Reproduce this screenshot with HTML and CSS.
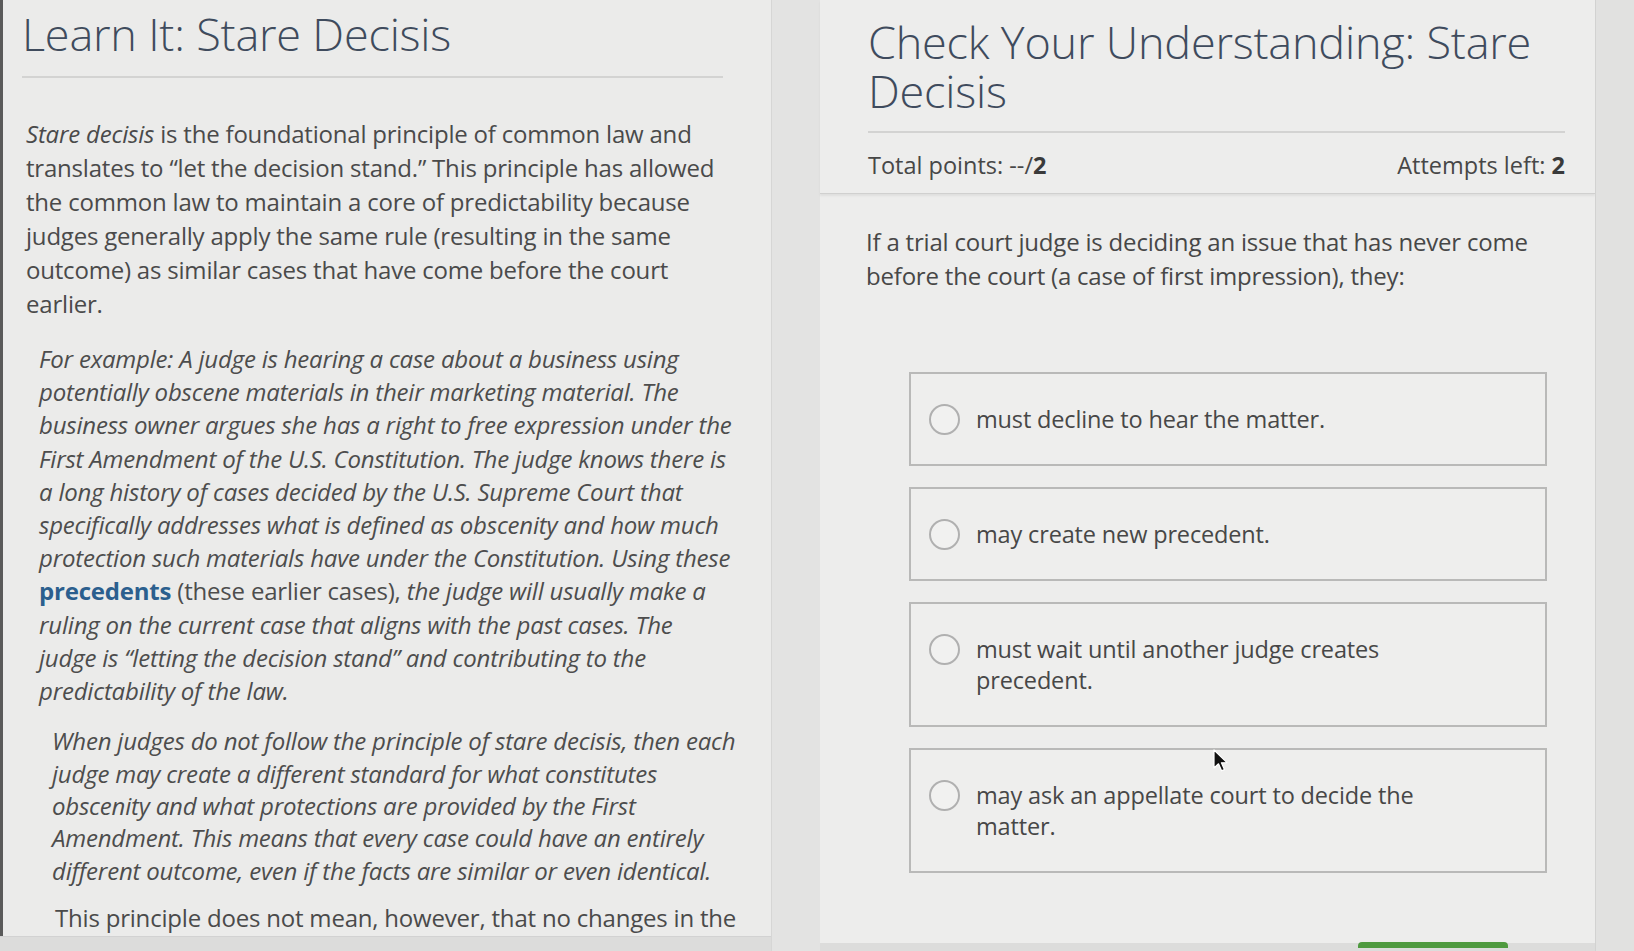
FILE: index.html
```html
<!DOCTYPE html>
<html lang="en">
<head>
<meta charset="utf-8">
<title>Stare Decisis</title>
<link rel="stylesheet" href="styles.css">
</head>
<body>
<div class="page">
  <section class="learn">
    <h1 class="learn-title">Learn It: Stare Decisis</h1>
    <hr class="rule">
    <p class="p1"><em>Stare decisis</em> is the foundational principle of common law and<br>translates to “let the decision stand.” This principle has allowed<br>the common law to maintain a core of predictability because<br>judges generally apply the same rule (resulting in the same<br>outcome) as similar cases that have come before the court<br>earlier.</p>
    <p class="p2"><em>For example: A judge is hearing a case about a business using<br>potentially obscene materials in their marketing material. The<br>business owner argues she has a right to free expression under the<br>First Amendment of the U.S. Constitution. The judge knows there is<br>a long history of cases decided by the U.S. Supreme Court that<br>specifically addresses what is defined as obscenity and how much<br>protection such materials have under the Constitution. Using these<br><strong class="term">precedents</strong> <span class="up">(these earlier cases),</span> the judge will usually make a<br>ruling on the current case that aligns with the past cases. The<br>judge is “letting the decision stand” and contributing to the<br>predictability of the law.</em></p>
    <p class="p3"><em>When judges do not follow the principle of stare decisis, then each<br>judge may create a different standard for what constitutes<br>obscenity and what protections are provided by the First<br>Amendment. This means that every case could have an entirely<br>different outcome, even if the facts are similar or even identical.</em></p>
    <p class="p4">This principle does not mean, however, that no changes in the</p>
  </section>
  <div class="gutter"></div>
  <section class="check">
    <header class="check-head">
      <h2 class="check-title">Check Your Understanding: Stare Decisis</h2>
      <hr class="rule">
      <div class="meta">
        <span>Total points: --/<b>2</b></span>
        <span>Attempts left: <b>2</b></span>
      </div>
    </header>
    <div class="question">
      <p class="prompt">If a trial court judge is deciding an issue that has never come before the court (a case of first impression), they:</p>
      <ul class="options">
        <li class="option"><span class="radio"></span><span class="label">must decline to hear the matter.</span></li>
        <li class="option"><span class="radio"></span><span class="label">may create new precedent.</span></li>
        <li class="option"><span class="radio"></span><span class="label">must wait until another judge creates precedent.</span></li>
        <li class="option cursor-host"><span class="radio"></span><span class="label">may ask an appellate court to decide the matter.</span>
          <svg class="cursor" width="16" height="24" viewBox="0 0 16 24"><path d="M1 1 L1 19 L5.5 14.8 L8.6 21.8 L11.4 20.6 L8.4 13.8 L14 13.6 Z" fill="#111" stroke="#fff" stroke-width="1.2" stroke-linejoin="round"/></svg>
        </li>
      </ul>
      <div class="submit-row"><span class="submit"></span></div>
    </div>
  </section>
  <div class="edge"></div>
</div>
</body>
</html>
```
FILE: styles.css
```css
html, body {
  margin: 0;
  padding: 0;
}
body {
  width: 1634px;
  height: 951px;
  overflow: hidden;
  background: #dcdcdb;
  font-family: "Open Sans", "Noto Sans", sans-serif;
  color: #4a4a4a;
}
.page {
  display: flex;
  align-items: flex-start;
  height: 951px;
}
.learn {
  flex: 0 0 auto;
  width: 701px;
  height: 928px;
  padding: 8px 48px 0 19px;
  background: #ebebea;
  border-left: 3px solid #5a5a5a;
  overflow: hidden;
  box-shadow: 0 1px 0 #d2d2d2;
}
.learn-title {
  margin: 0;
  font-size: 45px;
  line-height: 52px;
  font-weight: 300;
  color: #3f4b5d;
  letter-spacing: -0.2px;
}
.rule {
  margin: 16px 0 0;
  border: 0;
  height: 2px;
  background: #d3d3d2;
}
.learn p {
  margin: 0;
  font-size: 24px;
  letter-spacing: -0.2px;
  white-space: nowrap;
}
.learn .p1 { margin-top: 39px; padding-left: 4px; line-height: 34px; }
.learn .p2 { margin-top: 21px; padding-left: 17px; line-height: 33.2px; color: #4d4d4d; }
.learn .p3 { margin-top: 18px; padding-left: 30px; line-height: 32.4px; color: #4d4d4d; }
.learn .p4 { margin-top: 15px; padding-left: 33px; line-height: 32.4px; }
.term {
  color: #2b5f8e;
  font-weight: 700;
  font-style: normal;
}
.up {
  font-style: normal;
}
.gutter {
  flex: 0 0 48px;
  height: 951px;
  background: #e3e3e2;
  border-left: 1px solid #d6d6d5;
}
.check {
  flex: 0 0 auto;
  width: 775px;
  height: 943px;
  background: #ededec;
  display: flex;
  flex-direction: column;
}
.check-head {
  padding: 17px 30px 12px 48px;
  border-bottom: 1px solid #d0d0cf;
  box-shadow: 0 2px 2px rgba(0,0,0,0.06);
}
.check-title {
  margin: 0;
  font-size: 45px;
  line-height: 49px;
  font-weight: 300;
  color: #3f4b5d;
  letter-spacing: -0.2px;
  max-width: 690px;
}
.check-head .rule {
  margin-top: 16px;
}
.meta {
  display: flex;
  justify-content: space-between;
  margin-top: 16px;
  font-size: 23.5px;
  line-height: 32px;
  color: #474747;
}
.meta b {
  font-weight: 700;
  color: #3a3a3a;
}
.question {
  padding: 31px 48px 0 46px;
  display: flex;
  flex-direction: column;
  flex: 1;
}
.prompt {
  margin: 0;
  font-size: 24px;
  line-height: 34px;
  color: #474747;
  letter-spacing: -0.2px;
}
.options {
  list-style: none;
  margin: 79px 0 0 43px;
  padding: 0;
  display: flex;
  flex-direction: column;
  gap: 21px;
}
.option {
  display: flex;
  align-items: flex-start;
  gap: 16px;
  padding: 30px 18px 29px 18px;
  border: 2px solid #b9b9b8;
  background: #eeeeed;
  font-size: 23.5px;
  line-height: 31px;
  color: #474747;
  letter-spacing: -0.15px;
}
.radio {
  flex: 0 0 auto;
  width: 27px;
  height: 27px;
  border: 2px solid #b0b0b0;
  border-radius: 50%;
  background: #f1f1f0;
}
.label {
  max-width: 462px;
}
.option:nth-child(1) .label,
.option:nth-child(2) .label {
  max-width: none;
}
.cursor-host {
  position: relative;
}
.cursor {
  position: absolute;
  left: 302px;
  top: -1px;
}
.submit-row {
  margin-top: auto;
  display: flex;
  justify-content: flex-end;
  padding-right: 39px;
  height: 0;
}
.submit {
  display: block;
  width: 150px;
  height: 6px;
  margin-top: -1px;
  background: #4f9a3f;
  border-radius: 4px 4px 0 0;
}
.edge {
  flex: 1;
  height: 951px;
  background: #e1e1e0;
  border-left: 1px solid #d2d2d1;
}
```
